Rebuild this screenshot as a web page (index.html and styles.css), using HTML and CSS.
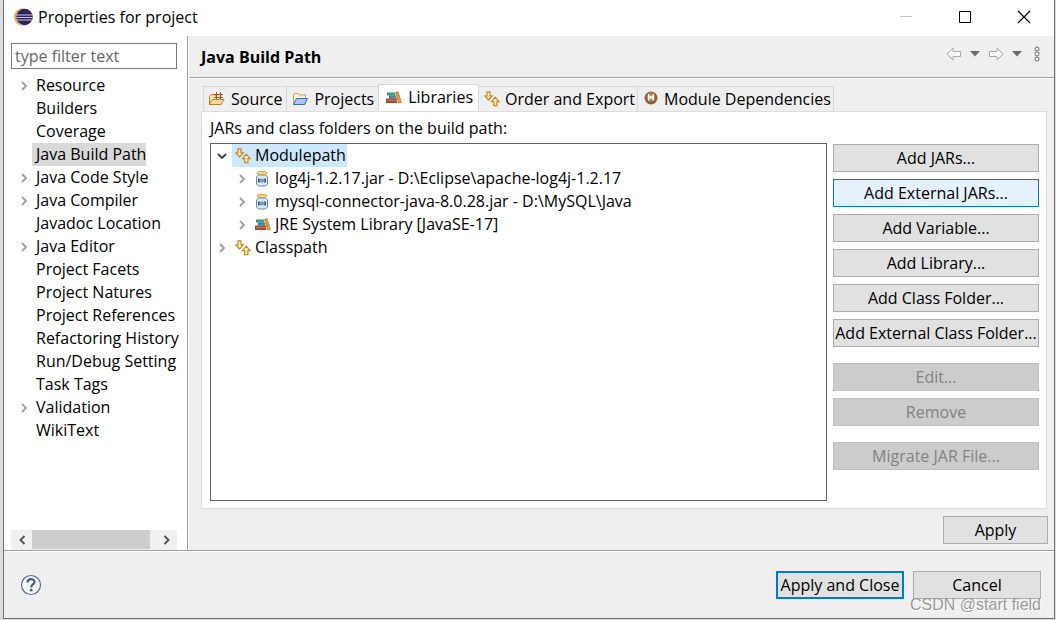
FILE: index.html
```html
<!DOCTYPE html>
<html lang="en">
<head>
    <meta charset="UTF-8">
    <meta name="viewport" content="width=device-width, initial-scale=1.0">
    <title>Properties for project</title>
    <link rel="stylesheet" href="styles.css">
</head>
<body>
    <!-- Shared icons -->
    <svg class="sprite" aria-hidden="true">
        <symbol id="chevron" viewBox="0 0 8 10"><path d="M2 1l4 4-4 4" fill="none" stroke="currentColor" stroke-width="1.9"/></symbol>
        <symbol id="paths" viewBox="0 0 16 16">
            <path d="M3 .8h3v4h2.300L4.500 9 .8 4.800H3z" fill="#fff0b8" stroke="#c48a28" stroke-width="1.200"/>
            <path d="M9.700 14.700h3.200v-4h2.300L11.300 6.200 7.500 10.700h2.200z" fill="#fff0b8" stroke="#c48a28" stroke-width="1.200"/>
        </symbol>
        <symbol id="books" viewBox="0 0 16 16">
            <path d="M1 2.500h8v3H1z" fill="#23907c"/><path d="M2 4h7" stroke="#4fb8a0"/>
            <path d="M3 5.500h7v3H3z" fill="#2f6f9c"/><path d="M4 7h6" stroke="#5ba6cc"/>
            <path d="M0 8.500h11v4.500H0z" fill="#9a4c2c"/><path d="M1 10.500h10" stroke="#c08058"/>
            <path d="M9.500 2.500L12 1.500l3.500 11-3 .5z" fill="#e39a35" stroke="#b86b1b" stroke-width=".6"/>
        </symbol>
        <symbol id="jar" viewBox="0 0 16 16">
            <path d="M3.500 4h7l2 2v7l-2 2h-7l-2-2V6z" fill="#dce8f6" stroke="#6d87ad"/>
            <rect x="2.500" y=".7" width="9" height="2.600" rx="1" fill="#fbe9a6" stroke="#c59a31"/>
            <path d="M3.500 8h1.500v3H3.500zM9 8h1.500v3H9zM7 7.500v4" fill="none" stroke="#2b4a80"/>
        </symbol>
    </svg>

    <div class="window">
        <header class="titlebar">
            <svg class="logo" viewBox="0 0 20 20" aria-hidden="true">
                <circle cx="9" cy="10" r="9" fill="#e9a64c"/>
                <circle cx="11" cy="10" r="9" fill="#fff"/>
                <circle cx="10.500" cy="10" r="8.300" fill="#2f2459"/>
                <path d="M2.500 8h16M2.500 10.500h16M3 13h15" stroke="#c9c5e0" stroke-width="1.200"/>
            </svg>
            <h1>Properties for project</h1>
            <div class="window-buttons">
                <button type="button" aria-label="Minimize" disabled><svg viewBox="0 0 14 14"><path d="M1 6.500h12" stroke="#c4c4c4"/></svg></button>
                <button type="button" aria-label="Maximize"><svg viewBox="0 0 14 14"><path d="M1.500 1.500h11v11h-11z" fill="none" stroke="#000"/></svg></button>
                <button type="button" aria-label="Close"><svg viewBox="0 0 14 14"><path d="M1 1l12 12M13 1L1 13" stroke="#000" stroke-width="1.200"/></svg></button>
            </div>
        </header>

        <div class="body">
            <!-- Page list -->
            <nav class="sidebar">
                <input class="filter" type="text" placeholder="type filter text" aria-label="Filter pages">
                <ul class="pages">
                    <li><button type="button" class="toggle" aria-label="Expand Resource"><svg><use href="#chevron"/></svg></button><a href="#">Resource</a></li>
                    <li><a href="#">Builders</a></li>
                    <li><a href="#">Coverage</a></li>
                    <li><a href="#" class="current" aria-current="page">Java Build Path</a></li>
                    <li><button type="button" class="toggle" aria-label="Expand Java Code Style"><svg><use href="#chevron"/></svg></button><a href="#">Java Code Style</a></li>
                    <li><button type="button" class="toggle" aria-label="Expand Java Compiler"><svg><use href="#chevron"/></svg></button><a href="#">Java Compiler</a></li>
                    <li><a href="#">Javadoc Location</a></li>
                    <li><button type="button" class="toggle" aria-label="Expand Java Editor"><svg><use href="#chevron"/></svg></button><a href="#">Java Editor</a></li>
                    <li><a href="#">Project Facets</a></li>
                    <li><a href="#">Project Natures</a></li>
                    <li><a href="#">Project References</a></li>
                    <li><a href="#">Refactoring History</a></li>
                    <li><a href="#">Run/Debug Setting</a></li>
                    <li><a href="#">Task Tags</a></li>
                    <li><button type="button" class="toggle" aria-label="Expand Validation"><svg><use href="#chevron"/></svg></button><a href="#">Validation</a></li>
                    <li><a href="#">WikiText</a></li>
                </ul>
                <div class="scrollbar">
                    <button type="button" aria-label="Scroll left"><svg class="flip" viewBox="0 0 8 10"><path d="M1.500 1l4 4-4 4" fill="none" stroke="#555" stroke-width="2"/></svg></button>
                    <div class="track"><div class="thumb"></div></div>
                    <button type="button" aria-label="Scroll right"><svg viewBox="0 0 8 10"><path d="M1.500 1l4 4-4 4" fill="none" stroke="#555" stroke-width="2"/></svg></button>
                </div>
            </nav>

            <main class="content">
                <div class="page-header">
                    <h2>Java Build Path</h2>
                    <div class="history">
                        <button type="button" aria-label="Back"><svg class="arrow" viewBox="0 0 16 14"><path d="M1 7l6-6v3.500h7.500v5H7V13z" fill="#f8f8f8" stroke="#a8a8a8"/></svg></button>
                        <button type="button" aria-label="Back history"><svg class="drop" viewBox="0 0 10 6"><path d="M0 0h10L5 5.500z" fill="#6b6b73"/></svg></button>
                        <button type="button" aria-label="Forward"><svg class="arrow" viewBox="0 0 16 14"><path d="M15 7L9 1v3.500H1.500v5H9V13z" fill="#f8f8f8" stroke="#a8a8a8"/></svg></button>
                        <button type="button" aria-label="Forward history"><svg class="drop" viewBox="0 0 10 6"><path d="M0 0h10L5 5.500z" fill="#6b6b73"/></svg></button>
                        <button type="button" aria-label="Menu"><svg class="dots" viewBox="0 0 6 16"><g fill="#fff" stroke="#666"><circle cx="3" cy="3" r="2"/><circle cx="3" cy="8" r="2"/><circle cx="3" cy="13" r="2"/></g></svg></button>
                    </div>
                </div>

                <div class="page">
                    <div class="tabs" role="tablist">
                        <button type="button" class="tab" role="tab">
                            <svg viewBox="0 0 16 16" aria-hidden="true">
                                <path d="M.5 13.500v-8l1.500-2h3l1 1.500h6v8.500z" fill="#f9e3a5" stroke="#b98232"/>
                                <path d="M6.500 2.500h6v5h-6z" fill="#f4d7ac"/><path d="M7.500 1v7M11.500 1v7M5 3.500h9M5 6.500h9" stroke="#8c5a35"/>
                                <path d="M.5 13.500l3-5h11.500l-3 5z" fill="#fbdc98" stroke="#b98232"/>
                            </svg>Source
                        </button>
                        <button type="button" class="tab" role="tab">
                            <svg viewBox="0 0 16 16" aria-hidden="true">
                                <path d="M1.500 13V3.500l1-1h4l1 1.500h6V13z" fill="#fdf2c8" stroke="#c3a04c"/>
                                <path d="M1.500 13.500l3-6h11l-3 6z" fill="#a9c9f5" stroke="#4168b4"/>
                            </svg>Projects
                        </button>
                        <button type="button" class="tab active" role="tab" aria-selected="true"><svg aria-hidden="true"><use href="#books"/></svg>Libraries</button>
                        <button type="button" class="tab wide" role="tab"><svg aria-hidden="true"><use href="#paths"/></svg>Order and Export</button>
                        <button type="button" class="tab wide last" role="tab">
                            <svg viewBox="0 0 16 16" aria-hidden="true">
                                <circle cx="8" cy="7" r="6.500" fill="#8f5f35"/><circle cx="8" cy="6" r="4.500" fill="#b08058"/>
                                <path d="M5.800 9.500v-5L8 7l2.200-2.500v5" fill="none" stroke="#fff" stroke-width="1.500"/>
                            </svg>Module Dependencies
                        </button>
                    </div>

                    <section class="panel" role="tabpanel">
                        <p class="caption">JARs and class folders on the build path:</p>
                        <div class="columns">
                            <ul class="entries">
                                <li>
                                    <div class="entry"><button type="button" class="toggle open" aria-label="Collapse Modulepath"><svg><use href="#chevron"/></svg></button><span class="name selected"><svg><use href="#paths"/></svg>Modulepath</span></div>
                                    <ul>
                                        <li class="entry"><button type="button" class="toggle" aria-label="Expand log4j"><svg><use href="#chevron"/></svg></button><span class="name"><svg><use href="#jar"/></svg>log4j-1.2.17.jar - D:\Eclipse\apache-log4j-1.2.17</span></li>
                                        <li class="entry"><button type="button" class="toggle" aria-label="Expand mysql-connector"><svg><use href="#chevron"/></svg></button><span class="name"><svg><use href="#jar"/></svg>mysql-connector-java-8.0.28.jar - D:\MySQL\Java</span></li>
                                        <li class="entry"><button type="button" class="toggle" aria-label="Expand JRE System Library"><svg><use href="#chevron"/></svg></button><span class="name"><svg><use href="#books"/></svg>JRE System Library [JavaSE-17]</span></li>
                                    </ul>
                                </li>
                                <li class="entry"><button type="button" class="toggle" aria-label="Expand Classpath"><svg><use href="#chevron"/></svg></button><span class="name"><svg><use href="#paths"/></svg>Classpath</span></li>
                            </ul>
                            <div class="actions">
                                <button type="button" class="button">Add JARs...</button>
                                <button type="button" class="button hot">Add External JARs...</button>
                                <button type="button" class="button">Add Variable...</button>
                                <button type="button" class="button">Add Library...</button>
                                <button type="button" class="button">Add Class Folder...</button>
                                <button type="button" class="button">Add External Class Folder...</button>
                                <button type="button" class="button group" disabled>Edit...</button>
                                <button type="button" class="button" disabled>Remove</button>
                                <button type="button" class="button group" disabled>Migrate JAR File...</button>
                            </div>
                        </div>
                    </section>
                    <button type="button" class="button apply">Apply</button>
                </div>
            </main>
        </div>

        <footer class="footer">
            <button type="button" class="help" aria-label="Help">
                <svg viewBox="0 0 22 22"><circle cx="11" cy="11" r="9.500" fill="#f7f7f7" stroke="#5a6b8e" stroke-width="1.200"/><path d="M7.500 8.500c0-4.500 7-4.500 7-.5 0 2.500-3.300 2.500-3.300 5.500" fill="none" stroke="#4a5f8c" stroke-width="2.200"/><circle cx="11.200" cy="16.200" r="1.400" fill="#4a5f8c"/></svg>
            </button>
            <button type="button" class="button default">Apply and Close</button>
            <button type="button" class="button">Cancel</button>
        </footer>
    </div>
    <span class="watermark">CSDN @start field</span>
</body>
</html>
```

FILE: styles.css
```css
/* General styles */
* {
    box-sizing: border-box;
}
body {
    margin: 0;
    padding: 0 1px 1px 3px;
    height: 100vh;
    background-color: #dcdcdc;
    color: #000;
    font-family: "Open Sans", "Noto Sans", sans-serif;
    font-size: 16px;
    line-height: 23px;
}
h1, h2, p, ul {
    margin: 0;
    padding: 0;
    font-size: 16px;
}
ul {
    list-style: none;
}
button {
    padding: 0;
    border: none;
    background: none;
    color: inherit;
    font: inherit;
}
svg {
    display: block;
    flex: none;
    width: 16px;
    height: 16px;
}
.sprite {
    position: absolute;
    width: 0;
    height: 0;
}
.window {
    display: flex;
    flex-direction: column;
    height: 100%;
    border: 1px solid #707070;
    border-top: none;
    background-color: #efefef;
}

/* Title bar */
.titlebar {
    display: flex;
    align-items: center;
    height: 36px;
    padding: 0 1px 2px 10px;
    background-color: white;
}
.titlebar h1 {
    flex: 1;
    margin-left: 4px;
    font-weight: normal;
}
.titlebar .logo {
    width: 20px;
    height: 20px;
}
.window-buttons {
    display: flex;
}
.window-buttons button {
    display: flex;
    justify-content: center;
    width: 59px;
}
.window-buttons svg {
    width: 14px;
    height: 14px;
}

/* Sidebar */
.body {
    display: flex;
    flex: 1;
    min-height: 0;
    border-bottom: 1px solid #a0a0a0;
}
.sidebar {
    display: flex;
    flex-direction: column;
    flex: none;
    width: 184px;
    padding: 7px 10px 0 7px;
    border-right: 1px solid #a0a0a0;
    background-color: white;
}
.filter {
    width: 100%;
    height: 26px;
    margin-bottom: 5px;
    padding: 0 3px;
    border: 1px solid #7a7a7a;
    font: inherit;
}
.filter::placeholder {
    color: #666;
}
.pages {
    flex: 1;
    margin-right: -8px;
    overflow: hidden;
    white-space: nowrap;
}
.pages li {
    display: flex;
}
.pages a {
    margin-left: 21px;
    padding: 0 4px;
    color: inherit;
    text-decoration: none;
}
.pages .toggle + a {
    margin-left: 0;
}
.pages .current {
    padding-right: 0;
    background-color: #d9d9d9;
}
.toggle {
    display: flex;
    align-items: center;
    justify-content: center;
    flex: none;
    width: 21px;
    height: 23px;
    padding-left: 4px;
    color: #a0a0a0;
}
.toggle svg {
    width: 8px;
    height: 10px;
}
.toggle.open svg {
    transform: rotate(90deg);
    color: #404040;
}
.scrollbar {
    display: flex;
    height: 20px;
    background-color: #f0f0f0;
}
.scrollbar button {
    display: flex;
    align-items: center;
    justify-content: center;
    width: 21px;
}
.scrollbar svg {
    width: 8px;
    height: 10px;
}
.scrollbar .flip {
    transform: scaleX(-1);
}
.track {
    flex: 1;
}
.thumb {
    width: 95%;
    height: 19px;
    background-color: #cdcdcd;
}

/* Page header */
.content {
    display: flex;
    flex-direction: column;
    flex: 1;
    min-width: 0;
    border-left: 1px solid white;
}
.page-header {
    display: flex;
    align-items: center;
    justify-content: space-between;
    height: 42px;
    padding: 2px 14px 0 12px;
    border-bottom: 1px solid #a0a0a0;
}
.history {
    display: flex;
    align-items: center;
    gap: 8px;
    padding-bottom: 7px;
}
.history .arrow {
    height: 14px;
}
.history .drop {
    width: 10px;
    height: 6px;
}
.history .dots {
    width: 6px;
    margin-left: 4px;
}

/* Tabs */
.page {
    display: flex;
    flex-direction: column;
    flex: 1;
    min-height: 0;
    padding: 5px 6px 6px 12px;
    border-top: 1px solid white;
}
.tabs {
    display: flex;
    align-items: flex-end;
    padding-left: 2px;
}
.tab {
    display: flex;
    align-items: center;
    gap: 6px;
    height: 25px;
    padding: 0 4px 0 5px;
    border: 1px solid #d9d9d9;
    border-width: 1px 0 0 1px;
    white-space: nowrap;
}
.tab.active {
    height: 28px;
    margin-bottom: -1px;
    padding: 0 5px 2px 7px;
    border-right-width: 1px;
    background-color: white;
}
.tab.wide {
    gap: 5px;
    padding-right: 2px;
}
.tab.active + .tab {
    border-left: none;
}
.tab.last {
    border-right-width: 1px;
}

/* Libraries panel */
.panel {
    display: flex;
    flex-direction: column;
    flex: 1;
    min-height: 0;
    margin-right: 1px;
    padding: 5px 7px 7px 8px;
    border: 1px solid #dcdcdc;
    background-color: white;
}
.columns {
    display: flex;
    flex: 1;
    gap: 6px;
    margin-top: 3px;
}
.entries {
    flex: 1;
    border: 1px solid #646464;
}
.entries ul {
    padding-left: 20px;
}
.entry {
    display: flex;
}
.entries .toggle {
    padding-left: 1px;
}
.name {
    display: flex;
    align-items: center;
    gap: 4px;
    padding: 0 1px 0 3px;
    white-space: nowrap;
}
.selected {
    background-color: #cce8ff;
}

/* Buttons */
.button {
    height: 28px;
    border: 1px solid #adadad;
    background-color: #e1e1e1;
    white-space: nowrap;
}
.button:hover, .button.hot {
    border-color: #0078d7;
    background-color: #e5f1fb;
}
.button:disabled {
    border-color: #bfbfbf;
    background-color: #cccccc;
    color: #838383;
}
.button.default {
    border: 2px solid #0078d7;
}
.actions {
    display: flex;
    flex-direction: column;
    flex: none;
    gap: 7px;
    width: 206px;
    padding-top: 1px;
}
.actions .group {
    margin-top: 9px;
}
.apply {
    align-self: flex-end;
    width: 105px;
    margin-top: 7px;
}

/* Footer */
.footer {
    display: flex;
    align-items: center;
    gap: 9px;
    height: 67px;
    padding: 0 13px 0 16px;
    border-top: 1px solid white;
}
.footer .button {
    width: 128px;
}
.help {
    margin-right: auto;
}
.help svg {
    width: 22px;
    height: 22px;
}

/* Watermark over the window corner */
.watermark {
    position: absolute;
    right: 15px;
    bottom: 4px;
    color: #9a9a9a;
    font-family: "Liberation Sans", Arial, sans-serif;
    font-size: 16px;
    text-shadow: 1px 1px 0 white;
}
```
